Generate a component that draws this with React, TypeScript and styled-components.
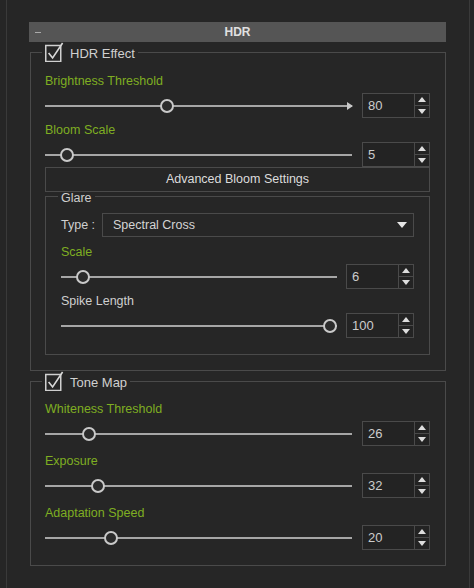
import React from 'react';
import styled, {createGlobalStyle} from 'styled-components';

const GlobalStyle = createGlobalStyle`
  html, body {
    margin: 0;
    padding: 0;
    background: #262626;
  }
  body {
    font-family: 'Liberation Sans', Arial, sans-serif;
    font-size: 12.5px;
    color: #cfcfcf;
  }
`;

const GREEN = '#7fae22';
const LINE = '#4a4a4a';
const TEXT_SIZE = '12.5px';

const Frame = styled.div`
  box-sizing: border-box;
  width: 464px;
  height: 588px;
  margin-left: 6px;
  padding: 22px 23px 0 22px;
  border-left: 1px solid #3a3a3a;
  border-right: 1px solid #3a3a3a;
  background: #262626;
`;

const HeaderBar = styled.div`
  position: relative;
  display: flex;
  align-items: center;
  justify-content: center;
  height: 20px;
  background: #555555;
  color: #e0e0e0;
  font-weight: bold;
  font-size: 12px;
`;

const Collapse = styled.span`
  position: absolute;
  left: 6px;
  top: 10px;
  width: 6px;
  height: 1px;
  background: #aaaaaa;
`;

const Group = styled.fieldset<{$inner?: boolean}>`
  margin: ${(p) => (p.$inner ? '-3px 0 0 0' : '0 0 0 1px')};
  padding: ${(p) => (p.$inner ? '0 15px 16px 15px' : '0 15px 15px 14px')};
  border: 1px solid ${LINE};
  min-width: 0;
`;

const Legend = styled.legend`
  display: flex;
  align-items: center;
  margin-left: -3px;
  padding: 0 3px;
  height: 20px;
  color: #d0d0d0;
  font-size: 13px;
`;

const TextLegend = styled.legend`
  margin-left: -3px;
  padding: 3px 3px 0 3px;
  line-height: 12px;
  color: #cfcfcf;
  font-size: ${TEXT_SIZE};
`;

const LegendLabel = styled.span`
  margin: 3px 0 0 6px;
  line-height: 16px;
`;

const Body = styled.div<{$top: number}>`
  padding-top: ${(p) => p.$top}px;
`;

const Param = styled.div<{$top?: number}>`
  margin-top: ${(p) => p.$top ?? 0}px;
`;

const Label = styled.div<{$plain?: boolean}>`
  height: 16px;
  line-height: 16px;
  margin-bottom: 4px;
  color: ${(p) => (p.$plain ? '#cfcfcf' : GREEN)};
  font-size: ${TEXT_SIZE};
`;

const Row = styled.div<{$gap: number}>`
  display: flex;
  align-items: center;
  gap: ${(p) => p.$gap}px;
  height: 25px;
`;

const Track = styled.div<{$arrow?: boolean}>`
  position: relative;
  flex: 1;
  height: 2px;
  background: #a6a6a6;

  ${(p) =>
    p.$arrow &&
    `
    &::after {
      content: '';
      position: absolute;
      right: -1px;
      top: -3px;
      border-top: 4px solid transparent;
      border-bottom: 4px solid transparent;
      border-left: 6px solid #c8c8c8;
    }
  `}
`;

const Thumb = styled.span`
  position: absolute;
  top: 1px;
  box-sizing: border-box;
  width: 14px;
  height: 14px;
  margin: -7px 0 0 -7px;
  border: 2px solid #c9c9c9;
  border-radius: 50%;
  background: #2b2b2b;
`;

const Spin = styled.div`
  display: flex;
  box-sizing: border-box;
  width: 68px;
  height: 25px;
  border: 1px solid ${LINE};
  background: #232323;
`;

const SpinValue = styled.div`
  flex: 1;
  padding-left: 5px;
  line-height: 23px;
  color: #cccccc;
  font-size: 13px;
`;

const SpinButtons = styled.div`
  display: flex;
  flex-direction: column;
  width: 14px;
  border-left: 1px solid ${LINE};
`;

const SpinHalf = styled.div<{$down?: boolean}>`
  flex: 1;
  display: flex;
  align-items: center;
  justify-content: center;
  border-top: ${(p) => (p.$down ? `1px solid ${LINE}` : 'none')};

  &::before {
    content: '';
    border-left: 4px solid transparent;
    border-right: 4px solid transparent;
    ${(p) => (p.$down ? 'border-top: 5px solid #dddddd;' : 'border-bottom: 5px solid #dddddd;')}
  }
`;

const WideButton = styled.div`
  box-sizing: border-box;
  height: 25px;
  border: 1px solid ${LINE};
  line-height: 23px;
  text-align: center;
  color: #dcdcdc;
  font-size: ${TEXT_SIZE};
`;

const TypeRow = styled.div`
  display: flex;
  align-items: center;
  height: 24px;
  margin-top: 9px;
`;

const TypeLabel = styled.span`
  width: 41px;
  color: #cfcfcf;
`;

const Select = styled.div`
  flex: 1;
  display: flex;
  align-items: center;
  justify-content: space-between;
  box-sizing: border-box;
  height: 24px;
  padding: 0 6px 0 10px;
  border: 1px solid ${LINE};
  color: #d4d4d4;

  &::after {
    content: '';
    border-left: 5px solid transparent;
    border-right: 5px solid transparent;
    border-top: 6px solid #e6e6e6;
  }
`;

const Check: React.FC = () => (
  <svg width="19" height="20" viewBox="0 0 19 20">
    <rect x="0.75" y="3.5" width="15" height="16" fill="none" stroke="#cfcfcf" strokeWidth="1.5" />
    <path d="M3.6 11 L7.6 16 L17.6 1" fill="none" stroke="#d8d8d8" strokeWidth="1.6" />
  </svg>
);

type SliderProps = {
  value: number;
  pos: number;
  gap?: number;
  arrow?: boolean;
};

const Slider: React.FC<SliderProps> = ({value, pos, gap = 10, arrow}) => (
  <Row $gap={gap}>
    <Track $arrow={arrow}>
      <Thumb style={{left: `${pos * 100}%`}} />
    </Track>
    <Spin>
      <SpinValue>{value}</SpinValue>
      <SpinButtons>
        <SpinHalf />
        <SpinHalf $down />
      </SpinButtons>
    </Spin>
  </Row>
);

const App: React.FC = () => {
  return (
    <>
      <GlobalStyle />
      <Frame>
        <HeaderBar>
          <Collapse />
          HDR
        </HeaderBar>

        <Group>
          <Legend>
            <Check />
            <LegendLabel>HDR Effect</LegendLabel>
          </Legend>
          <Body $top={11}>
            <Param>
              <Label>Brightness Threshold</Label>
              <Slider value={80} pos={0.399} arrow />
            </Param>
            <Param $top={4}>
              <Label>Bloom Scale</Label>
              <Slider value={5} pos={0.071} />
            </Param>
            <WideButton>Advanced Bloom Settings</WideButton>

            <Group $inner>
              <TextLegend>Glare</TextLegend>
              <TypeRow>
                <TypeLabel>Type :</TypeLabel>
                <Select>Spectral Cross</Select>
              </TypeRow>
              <Param $top={7}>
                <Label>Scale</Label>
                <Slider value={6} pos={0.081} gap={9} />
              </Param>
              <Param $top={4}>
                <Label $plain>Spike Length</Label>
                <Slider value={100} pos={0.973} gap={9} />
              </Param>
            </Group>
          </Body>
        </Group>

        <Group>
          <Legend>
            <Check />
            <LegendLabel>Tone Map</LegendLabel>
          </Legend>
          <Body $top={10}>
            <Param>
              <Label>Whiteness Threshold</Label>
              <Slider value={26} pos={0.144} />
            </Param>
            <Param $top={7}>
              <Label>Exposure</Label>
              <Slider value={32} pos={0.174} />
            </Param>
            <Param $top={7}>
              <Label>Adaptation Speed</Label>
              <Slider value={20} pos={0.215} />
            </Param>
          </Body>
        </Group>
      </Frame>
    </>
  );
};

export default App;
